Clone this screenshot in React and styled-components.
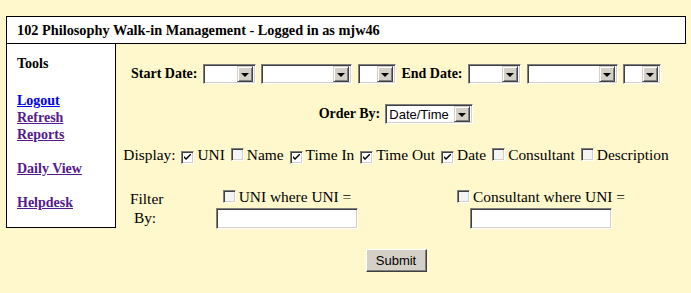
import React from 'react';
import styled, { createGlobalStyle } from 'styled-components';

const GlobalStyle = createGlobalStyle`
body {
  margin: 0;
  background: #fff8cd;
  font-family: "Liberation Serif", "Times New Roman", serif;
  color: #000;
}
`;

const Page = styled.div`
padding: 16px 5px 0 6px;
`;

const Header = styled.div`
box-sizing: border-box;
width: 680px;
height: 28px;
border: 1px solid #000;
background: #fff;
padding-left: 10px;
font-size: 14.3px;
font-weight: 700;
line-height: 26px;
`;

const Body = styled.div`
display: flex;
`;

const Sidebar = styled.div`
box-sizing: border-box;
flex-shrink: 0;
width: 110px;
height: 184px;
border: 1px solid #000;
border-top: none;
background: #fff;
padding: 11px 10px;
font-size: 14px;
font-weight: 700;
line-height: 17px;
`;

const SideTitle = styled.div`
margin-bottom: 20px;
`;

const SideLink = styled.a`
display: block;
color: ${p => (p.$visited ? '#551a8b' : '#0000ee')};
text-decoration: underline;
margin-bottom: ${p => (p.$gap ? '17px' : '0')};
`;

const Main = styled.div`
flex: 1;
min-width: 0;
display: flex;
flex-direction: column;
align-items: center;
padding-right: 10px;
font-size: 15.4px;
`;

const Row = styled.div`
display: flex;
align-items: center;
gap: ${p => p.$gap || '5px'};
margin-top: ${p => p.$top || '0'};
`;

const BoldLabel = styled.span`
font-size: 14px;
font-weight: 700;
`;

const SelectBox = styled.div`
box-sizing: border-box;
width: ${p => p.$w}px;
height: 20px;
display: flex;
align-items: center;
justify-content: space-between;
background: #fff;
border: 1px solid;
border-color: #808080 #fff #fff #808080;
box-shadow: inset 1px 1px 0 #404040, inset -1px -1px 0 #d4d0c8;
padding: 1px 2px 1px 3px;
font-family: "Liberation Sans", Arial, sans-serif;
font-size: 13px;
`;

const ArrowButton = styled.span`
box-sizing: border-box;
width: 16px;
height: 16px;
display: flex;
align-items: center;
justify-content: center;
background: #d4d0c8;
border: 1px solid;
border-color: #d4d0c8 #404040 #404040 #d4d0c8;
box-shadow: inset 1px 1px 0 #fff, inset -1px -1px 0 #808080;
&::after {
  content: '';
  border-left: 4px solid transparent;
  border-right: 4px solid transparent;
  border-top: 4px solid #000;
  margin-top: 1px;
}
`;

const Select = ({ w, value }) => (
  <SelectBox $w={w}>
    <span>{value}</span>
    <ArrowButton />
  </SelectBox>
);

const Check = styled.span`
box-sizing: border-box;
display: inline-flex;
align-items: center;
justify-content: center;
width: 13px;
height: 13px;
background: ${p => (p.$checked ? '#fff' : '#f4f4f4')};
border: 1px solid;
border-color: #808080 #fff #fff #808080;
box-shadow: inset 1px 1px 0 #404040, inset -1px -1px 0 #d4d0c8;
vertical-align: -1px;
margin-right: 3px;
`;

const CheckBox = ({ checked }) => (
  <Check $checked={checked}>
    {checked && (
      <svg width="7" height="7" viewBox="0 0 7 7">
        <path d="M0 2 L0 4 L2 6 L7 1 L7 -1 L2 4 Z" fill="#000" />
      </svg>
    )}
  </Check>
);

const Option = styled.span`
white-space: nowrap;
`;

const FilterGrid = styled.div`
align-self: flex-start;
display: grid;
grid-template-columns: 56px 230px 278px;
align-items: center;
justify-items: center;
margin-top: 23px;
line-height: 19px;
`;

const FilterLabel = styled.div`
text-align: center;
width: 30px;
margin-left: 2px;
`;

const FilterCell = styled.div`
display: flex;
flex-direction: column;
align-items: center;
gap: 2px;
`;

const TextInput = styled.div`
box-sizing: border-box;
width: 142px;
height: 21px;
background: #fff;
border: 1px solid;
border-color: #808080 #fff #fff #808080;
box-shadow: inset 1px 1px 0 #404040, inset -1px -1px 0 #d4d0c8;
`;

const SubmitButton = styled.button`
box-sizing: border-box;
width: 61px;
height: 23px;
margin-top: 20px;
padding: 0;
background: #d4d0c8;
border: 1px solid;
border-color: #fff #404040 #404040 #fff;
box-shadow: inset -1px -1px 0 #808080;
font-family: "Liberation Sans", Arial, sans-serif;
font-size: 13px;
color: #000;
`;

const displayOptions = [
  ['UNI', true],
  ['Name', false],
  ['Time In', true],
  ['Time Out', true],
  ['Date', true],
  ['Consultant', false],
  ['Description', false],
];

export default function App() {
  return (
    <>
      <GlobalStyle />
      <Page>
        <Header>102 Philosophy Walk-in Management - Logged in as mjw46</Header>
        <Body>
          <Sidebar>
            <SideTitle>Tools</SideTitle>
            <SideLink>Logout</SideLink>
            <SideLink $visited>Refresh</SideLink>
            <SideLink $visited $gap>Reports</SideLink>
            <SideLink $visited $gap>Daily View</SideLink>
            <SideLink $visited>Helpdesk</SideLink>
          </Sidebar>
          <Main>
            <Row $top="20px" $gap="5.5px">
              <BoldLabel>Start Date:</BoldLabel>
              <Select w={53} />
              <Select w={91} />
              <Select w={38} />
              <BoldLabel>End Date:</BoldLabel>
              <Select w={53} />
              <Select w={91} />
              <Select w={38} />
            </Row>
            <Row $top="20px">
              <BoldLabel>Order By:</BoldLabel>
              <Select w={88} value="Date/Time" />
            </Row>
            <Row $top="22px" $gap="6px">
              <span>Display:</span>
              {displayOptions.map(([label, checked]) => (
                <Option key={label}>
                  <CheckBox checked={checked} />
                  {label}
                </Option>
              ))}
            </Row>
            <FilterGrid>
              <FilterLabel>Filter By:</FilterLabel>
              <FilterCell>
                <Option>
                  <CheckBox />
                  UNI where UNI =
                </Option>
                <TextInput />
              </FilterCell>
              <FilterCell>
                <Option>
                  <CheckBox />
                  Consultant where UNI =
                </Option>
                <TextInput />
              </FilterCell>
            </FilterGrid>
            <SubmitButton>Submit</SubmitButton>
          </Main>
        </Body>
      </Page>
    </>
  );
}
